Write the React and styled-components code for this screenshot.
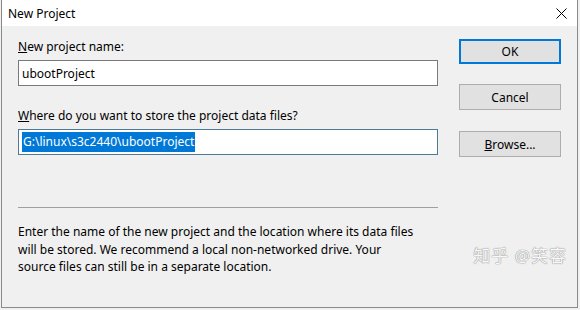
import styled, { createGlobalStyle } from "styled-components";

const Global = createGlobalStyle`
  html, body {
    margin: 0;
    padding: 0;
    background: #f0f0f0;
  }
  body {
    font-family: "Noto Sans", "Noto Sans CJK SC", sans-serif;
    font-size: 12px;
    color: #000;
  }
`;

const Window = styled.div`
  position: relative;
  box-sizing: border-box;
  width: 577px;
  height: 308px;
  margin-left: 1px;
  background: #f0f0f0;
  border: 1px solid #8a8a8a;
  border-top: none;
  display: flex;
  flex-direction: column;
`;

const TitleBar = styled.div`
  flex: none;
  height: 26px;
  background: #fff;
  display: flex;
  align-items: center;
  justify-content: space-between;
  padding: 0 10px 0 6px;
  font-size: 12px;
`;

const Body = styled.div`
  display: grid;
  grid-template-columns: 420px 102px;
  column-gap: 21px;
  align-items: start;
  padding: 0 0 0 16px;
`;

const Column = styled.div`
  display: flex;
  flex-direction: column;
`;

const Label = styled.div`
  height: 17px;
  line-height: 17px;
  margin-top: ${(p) => p.$top}px;
  margin-bottom: 5px;
`;

const Field = styled.div`
  box-sizing: border-box;
  flex: none;
  height: 26px;
  border: 1px solid ${(p) => (p.$focus ? "#4d7a94" : "#7a7a7a")};
  background: #fff;
  display: flex;
  align-items: center;
  padding: 0 3px;
`;

const Selected = styled.span`
  background: #0078d7;
  color: #fff;
  line-height: 20px;
  padding: 0 1px;
`;

const Separator = styled.div`
  flex: none;
  height: 1px;
  background: #a0a0a0;
  margin-top: 52px;
`;

const Description = styled.p`
  margin: 15px 0 0 0;
  line-height: 17.5px;
`;

const Button = styled.button`
  box-sizing: border-box;
  width: 102px;
  height: ${(p) => (p.$default ? 25 : 26)}px;
  margin-top: ${(p) => p.$top}px;
  background: #e1e1e1;
  border: ${(p) => (p.$default ? "2px solid #0078d7" : "1px solid #adadad")};
  font-family: inherit;
  font-size: 12px;
  color: #000;
  padding: 0;
`;

const Watermark = styled.div`
  position: absolute;
  right: 10px;
  bottom: 40px;
  font-size: 17px;
  color: #f8f8f8;
  text-shadow: 0 0 1px #8a8a8a, 0 0 1px #8a8a8a;
  letter-spacing: 1px;
`;

export default function App() {
  return (
    <>
      <Global />
      <Window>
        <TitleBar>
          <span>New Project</span>
          <svg width="11" height="11" viewBox="0 0 11 11">
            <path d="M0.5 0.5 L10.5 10.5 M10.5 0.5 L0.5 10.5" stroke="#000" strokeWidth="1" />
          </svg>
        </TitleBar>
        <Body>
          <Column>
            <Label $top={12}>
              <u>N</u>ew project name:
            </Label>
            <Field>ubootProject</Field>
            <Label $top={21}>
              <u>W</u>here do you want to store the project data files?
            </Label>
            <Field $focus>
              <Selected>G:\linux\s3c2440\ubootProject</Selected>
            </Field>
            <Separator />
            <Description>
              Enter the name of the new project and the location where its data files
              <br />
              will be stored. We recommend a local non-networked drive. Your
              <br />
              source files can still be in a separate location.
            </Description>
          </Column>
          <Column>
            <Button $default $top={13}>OK</Button>
            <Button $top={20}>Cancel</Button>
            <Button $top={21}>
              <u>B</u>rowse...
            </Button>
          </Column>
        </Body>
        <Watermark>知乎 @笑容</Watermark>
      </Window>
    </>
  );
}
